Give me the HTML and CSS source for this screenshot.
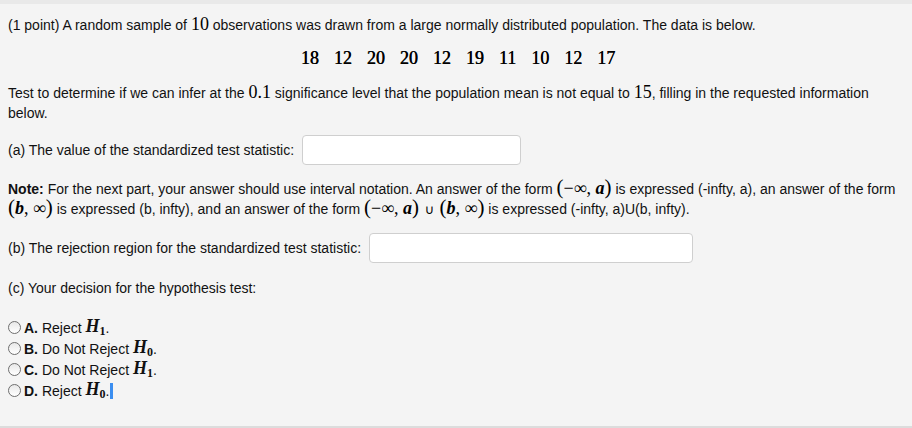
FILE: index.html
```html
<!DOCTYPE html>
<html>
<head>
<meta charset="utf-8">
<link rel="stylesheet" href="styles.css">
</head>
<body>
<div class="problem">
  <p class="line">(1 point) A random sample of <span class="m">10</span> observations was drawn from a large normally distributed population. The data is below.</p>
  <div class="data">
    <span>18</span><span>12</span><span>20</span><span>20</span><span>12</span><span>19</span><span>11</span><span>10</span><span>12</span><span>17</span>
  </div>
  <p class="para">Test to determine if we can infer at the <span class="m">0.1</span> significance level that the population mean is not equal to <span class="m">15</span>, filling in the requested information below.</p>
  <div class="q qa">(a) The value of the standardized test statistic: <span class="box box-a"></span></div>
  <p class="para note"><b>Note:</b> For the next part, your answer should use interval notation. An answer of the form <span class="m"><span class="par">(</span>−∞, <i>a</i><span class="par">)</span></span> is expressed (-infty, a), an answer of the form <span class="m"><span class="par">(</span><i>b</i>, ∞<span class="par">)</span></span> is expressed (b, infty), and an answer of the form <span class="m"><span class="par">(</span>−∞, <i>a</i><span class="par">)</span> <span class="cup">∪</span> <span class="par">(</span><i>b</i>, ∞<span class="par">)</span></span> is expressed (-infty, a)U(b, infty).</p>
  <div class="q qb">(b) The rejection region for the standardized test statistic: <span class="box box-b"></span></div>
  <p class="line qc">(c) Your decision for the hypothesis test:</p>
  <ul class="opts">
    <li><span class="radio"></span><b>A.</b>&nbsp;Reject <span class="h">H<sub>1</sub></span>.</li>
    <li><span class="radio"></span><b>B.</b>&nbsp;Do Not Reject <span class="h">H<sub>0</sub></span>.</li>
    <li><span class="radio"></span><b>C.</b>&nbsp;Do Not Reject <span class="h">H<sub>1</sub></span>.</li>
    <li><span class="radio"></span><b>D.</b>&nbsp;Reject <span class="h">H<sub>0</sub></span>.<span class="caret"></span></li>
  </ul>
</div>
</body>
</html>
```
FILE: styles.css
```css
html, body {
  margin: 0;
  padding: 0;
}
body {
  background: #f4f4f4;
  font-family: "Liberation Sans", Arial, sans-serif;
  font-size: 14px;
  color: #111;
  width: 912px;
  height: 428px;
  overflow: hidden;
}
.problem {
  box-sizing: border-box;
  height: 428px;
  border-top: 4px solid #e9e9e9;
  border-bottom: 2px solid #dcdcdc;
  padding: 11px 8px 0 8px;
}
p { margin: 0; }
.line {
  line-height: 20px;
}
.m {
  font-family: "Liberation Serif", "Times New Roman", serif;
  font-size: 18px;
  color: #000;
  line-height: 14px;
}
.m i {
  font-weight: bold;
}
.par {
  font-size: 21px;
}
.cup {
  font-family: "DejaVu Sans", sans-serif;
  font-size: 13px;
  margin: 0 1px;
}
.data {
  display: flex;
  justify-content: center;
  gap: 15px;
  margin-top: 13px;
  font-family: "Liberation Serif", "Times New Roman", serif;
  font-size: 18px;
  color: #000;
  line-height: 20px;
  padding-left: 4px;
  text-shadow: 0.3px 0 0 #000;
}
.para {
  line-height: 20px;
  margin-top: 15px;
}
.q {
  display: flex;
  align-items: center;
  white-space: pre;
}
.qa { margin-top: 12px; }
.box {
  display: inline-block;
  box-sizing: border-box;
  height: 30px;
  background: #fff;
  border: 1px solid #cfcfcf;
  border-radius: 4px;
  margin-left: 4px;
}
.box-a { width: 219px; }
.box-b { width: 324px; }
.note { margin-top: 14px; }
.qb { margin-top: 14px; }
.qc { margin-top: 15px; }
.opts {
  list-style: none;
  margin: 19px 0 0 0;
  padding: 0;
}
.opts li {
  display: flex;
  align-items: center;
  height: 21px;
}
.radio {
  display: inline-block;
  box-sizing: border-box;
  width: 13px;
  height: 13px;
  border: 1px solid #6e6e6e;
  border-radius: 50%;
  background: linear-gradient(#e8e8e8, #ffffff);
  margin-right: 3px;
}
.h {
  font-family: "Liberation Serif", "Times New Roman", serif;
  font-style: italic;
  font-weight: bold;
  font-size: 18px;
  margin-left: 4px;
}
.h sub {
  font-style: normal;
  font-size: 12px;
  vertical-align: -3px;
}
.caret {
  display: inline-block;
  width: 3px;
  height: 16px;
  background: #3b8ef0;
  margin-left: 1px;
}
```
